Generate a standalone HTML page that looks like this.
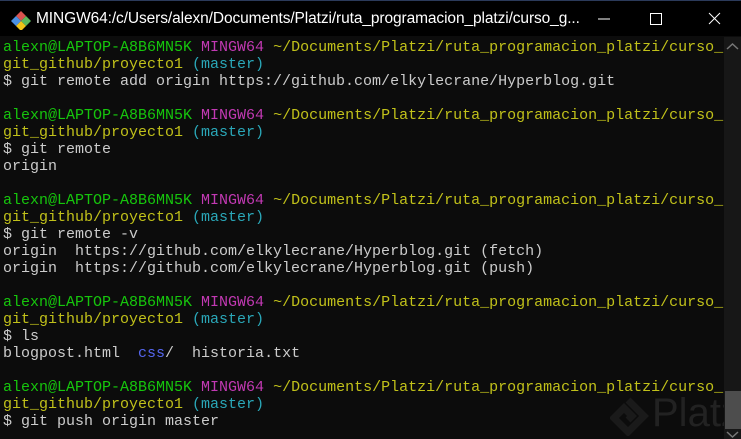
<!DOCTYPE html>
<html><head><meta charset="utf-8"><style>
html,body{margin:0;padding:0;background:#0c0c0c;width:741px;height:439px;overflow:hidden;position:relative}
.title{position:absolute;left:0;top:0;width:741px;height:36px;background:#000;border-top:1px solid #2b3a5a;box-sizing:border-box}
.title .t{position:absolute;left:36px;top:9px;color:#fff;font:15.5px "Liberation Sans",sans-serif;white-space:nowrap;letter-spacing:-0.1px}
.term{position:absolute;left:3px;top:39px;font:15px/17px "Liberation Mono",monospace;color:#cccccc;white-space:pre}
.g{color:#16c60c}.m{color:#c239b3}.y{color:#c1c11a}.c{color:#2aa7b8}.b{color:#5566ee}
.sb{position:absolute;left:724px;top:37px;width:17px;height:402px;background:#171717}
.th{position:absolute;left:725px;top:391px;width:16px;height:38px;background:#4d4d4d}
.wm{position:absolute;color:#222;font:40px "Liberation Sans",sans-serif;}
</style></head><body>
<div class="title">
<svg style="position:absolute;left:10px;top:9px" width="22" height="20" viewBox="0 0 22 20">
<polygon points="11,1 16,6 11,11 6,6" fill="#d9534f"/>
<polygon points="16,6 21,11 16,16 11,11" fill="#5cb85c"/>
<polygon points="6,6 11,11 6,16 1,11" fill="#4a90e2"/>
<polygon points="11,11 16,16 11,21 6,16" fill="#f0c419"/>
</svg>
<div class="t">MINGW64:/c/Users/alexn/Documents/Platzi/ruta_programacion_platzi/curso_g...</div>
<svg style="position:absolute;left:590px;top:8px" width="140" height="20" viewBox="0 0 140 20">
<line x1="8" y1="10" x2="20" y2="10" stroke="#fff" stroke-width="1"/>
<rect x="60.5" y="4.5" width="11" height="11" fill="none" stroke="#fff"/>
<line x1="119" y1="4" x2="130" y2="15" stroke="#fff"/><line x1="130" y1="4" x2="119" y2="15" stroke="#fff"/>
</svg>
</div>
<svg style="position:absolute;left:610px;top:396px" width="40" height="40" viewBox="0 0 40 40"><path d="M18 4 L34 20 L18 36 L4 22 L14 12 L22 20 L18 24" fill="none" stroke="#1a1a1a" stroke-width="7"/></svg>
<div class="wm" style="left:652px;top:391px">Platz</div>
<div class="term"><span class="g">alexn@LAPTOP-A8B6MN5K</span> <span class="m">MINGW64</span> <span class="y">~/Documents/Platzi/ruta_programacion_platzi/curso_</span>
<span class="y">git_github/proyecto1</span> <span class="c">(master)</span>
$ git remote add origin https://github.com/elkylecrane/Hyperblog.git

<span class="g">alexn@LAPTOP-A8B6MN5K</span> <span class="m">MINGW64</span> <span class="y">~/Documents/Platzi/ruta_programacion_platzi/curso_</span>
<span class="y">git_github/proyecto1</span> <span class="c">(master)</span>
$ git remote
origin

<span class="g">alexn@LAPTOP-A8B6MN5K</span> <span class="m">MINGW64</span> <span class="y">~/Documents/Platzi/ruta_programacion_platzi/curso_</span>
<span class="y">git_github/proyecto1</span> <span class="c">(master)</span>
$ git remote -v
origin  https://github.com/elkylecrane/Hyperblog.git (fetch)
origin  https://github.com/elkylecrane/Hyperblog.git (push)

<span class="g">alexn@LAPTOP-A8B6MN5K</span> <span class="m">MINGW64</span> <span class="y">~/Documents/Platzi/ruta_programacion_platzi/curso_</span>
<span class="y">git_github/proyecto1</span> <span class="c">(master)</span>
$ ls
blogpost.html  <span class="b">css</span>/  historia.txt

<span class="g">alexn@LAPTOP-A8B6MN5K</span> <span class="m">MINGW64</span> <span class="y">~/Documents/Platzi/ruta_programacion_platzi/curso_</span>
<span class="y">git_github/proyecto1</span> <span class="c">(master)</span>
$ git push origin master</div>
<div class="sb"></div>
<svg style="position:absolute;left:726px;top:42px" width="13" height="10" viewBox="0 0 13 10"><polyline points="1,7 6.5,2 12,7" fill="none" stroke="#777" stroke-width="1.5"/></svg>
<div class="th"></div>
<svg style="position:absolute;left:726px;top:431px" width="13" height="8" viewBox="0 0 13 8"><polyline points="1,1 6.5,6 12,1" fill="none" stroke="#777" stroke-width="1.5"/></svg>
</body></html>
